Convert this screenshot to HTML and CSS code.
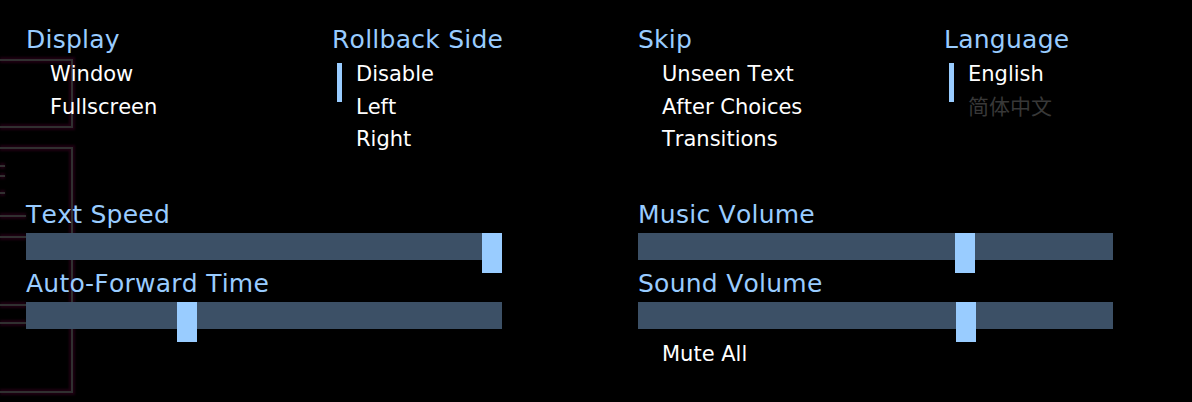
FILE: index.html
```html
<!DOCTYPE html>
<html>
<head>
  <title>Preferences</title>
  <link rel="stylesheet" href="styles.css">
</head>
<body>
  <!-- faint frame lines peeking in from the game menu behind -->
  <svg class="backdrop" width="80" height="402" viewBox="0 0 80 402">
    <g class="glow">
      <path d="M0 60H72V127H0"/>
      <path d="M0 148H72V392H0"/>
      <path d="M0 216H26M0 237H26M0 305H26M0 323H26"/>
      <path d="M0 166H5M0 176H5M0 193H5"/>
    </g>
    <g class="line">
      <path d="M0 60H72V127H0"/>
      <path d="M0 148H72V392H0"/>
      <path d="M0 216H26M0 237H26M0 305H26M0 323H26"/>
      <path d="M0 166H5M0 176H5M0 193H5"/>
    </g>
  </svg>

  <div class="prefs">
    <div class="pref-row">
      <div class="pref-group">
        <h3 class="pref-label">Display</h3>
        <ul class="options">
          <li>Window</li>
          <li>Fullscreen</li>
        </ul>
      </div>
      <div class="pref-group">
        <h3 class="pref-label">Rollback Side</h3>
        <ul class="options">
          <li class="selected">Disable</li>
          <li>Left</li>
          <li>Right</li>
        </ul>
      </div>
      <div class="pref-group">
        <h3 class="pref-label">Skip</h3>
        <ul class="options">
          <li>Unseen Text</li>
          <li>After Choices</li>
          <li>Transitions</li>
        </ul>
      </div>
      <div class="pref-group">
        <h3 class="pref-label">Language</h3>
        <ul class="options">
          <li class="selected">English</li>
          <li class="muted cjk">简体中文</li>
        </ul>
      </div>
    </div>

    <div class="slider-row">
      <div class="slider-col">
        <h3 class="pref-label">Text Speed</h3>
        <div class="bar"><span class="thumb" style="left: 456px"></span></div>
        <h3 class="pref-label">Auto-Forward Time</h3>
        <div class="bar"><span class="thumb" style="left: 151px"></span></div>
      </div>
      <div class="slider-col">
        <h3 class="pref-label">Music Volume</h3>
        <div class="bar"><span class="thumb" style="left: 317px"></span></div>
        <h3 class="pref-label">Sound Volume</h3>
        <div class="bar"><span class="thumb" style="left: 318px"></span></div>
        <ul class="options">
          <li>Mute All</li>
        </ul>
      </div>
    </div>
  </div>
</body>
</html>
```

FILE: styles.css
```css
body {
  margin: 0;
  background-color: #000;
  color: #fff;
  font-family: "DejaVu Sans", sans-serif;
  font-kerning: none;
  width: 1192px;
  height: 402px;
  overflow: hidden;
  position: relative;
}

/* background frame lines */
.backdrop {
  position: absolute;
  left: 0;
  top: 0;
}

.backdrop path {
  fill: none;
}

.backdrop .glow {
  stroke: rgba(100, 0, 55, 0.3);
  stroke-width: 6;
  filter: blur(1px);
}

.backdrop .line {
  stroke: #303030;
  stroke-width: 2;
}

.prefs {
  position: relative;
  padding: 25px 0 0 26px;
}

.pref-row {
  display: grid;
  grid-template-columns: repeat(4, 306px);
}

.pref-label {
  margin: 0;
  font-size: 25px;
  font-weight: normal;
  line-height: 30px;
  letter-spacing: 0.25px;
  color: #99ccff;
}

.options {
  list-style: none;
  margin: 3px 0 0 0;
  padding: 0;
}

.options li {
  position: relative;
  padding-left: 24px;
  font-size: 21px;
  line-height: 32.5px;
}

.options li.selected::before {
  content: "";
  position: absolute;
  left: 5px;
  top: 5px;
  width: 5px;
  height: 39px;
  background-color: #99ccff;
}

.options li.muted {
  color: #383838;
}

.cjk {
  font-family: "DejaVu Sans", "Noto Sans CJK SC", sans-serif;
}

/* sliders */
.slider-row {
  display: grid;
  grid-template-columns: repeat(2, 612px);
  margin-top: 44.5px;
}

.bar {
  position: relative;
  width: 476px;
  height: 27px;
  margin: 3px 0 9px 0;
  background-color: #3c5066;
}

.slider-col:last-child .bar {
  width: 475px;
}

.thumb {
  position: absolute;
  top: 0;
  width: 20px;
  height: 40px;
  background-color: #99ccff;
}

.slider-col .options {
  margin-top: 0;
}
```
